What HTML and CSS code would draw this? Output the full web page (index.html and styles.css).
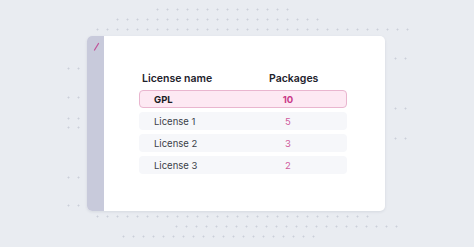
FILE: index.html
```html
<!DOCTYPE html>
<html>
<head>
<meta charset="utf-8">
<link rel="stylesheet" href="styles.css">
</head>
<body>
<div class="page">
  <div class="dots d-top1"></div>
  <div class="dots d-top2"></div>
  <div class="dots d-top3"></div>
  <div class="dots d-bot1"></div>
  <div class="dots d-bot2"></div>
  <div class="dots d-bot3"></div>
  <div class="dots d-left1"></div>
  <div class="dots d-left2"></div>
  <div class="dots d-left3"></div>
  <div class="dots d-left4"></div>
  <div class="dots d-left5"></div>
  <div class="dots d-left6"></div>
  <div class="dots d-right1"></div>
  <div class="dots d-right2"></div>
  <div class="dots d-right3"></div>

  <div class="card">
    <div class="sidebar">
      <svg class="slash" width="8" height="10" viewBox="0 0 8 10"><line x1="6.5" y1="1.5" x2="2.5" y2="8" stroke="#c0559a" stroke-width="1.3" stroke-linecap="round"/></svg>
    </div>
    <div class="content">
      <div class="table">
        <div class="thead">
          <span class="th-name">License name</span>
          <span class="th-pkg">Packages</span>
        </div>
        <div class="row active">
          <span class="name">GPL</span>
          <span class="num">10</span>
        </div>
        <div class="row">
          <span class="name">License 1</span>
          <span class="num">5</span>
        </div>
        <div class="row">
          <span class="name">License 2</span>
          <span class="num">3</span>
        </div>
        <div class="row">
          <span class="name">License 3</span>
          <span class="num">2</span>
        </div>
      </div>
    </div>
  </div>
</div>
</body>
</html>
```
FILE: styles.css
```css
* { box-sizing: border-box; }
html, body {
  margin: 0;
  padding: 0;
  width: 474px;
  height: 247px;
  overflow: hidden;
  background: #e9ecf1;
  font-family: Inter, "Liberation Sans", sans-serif;
}
.page {
  position: relative;
  width: 474px;
  height: 247px;
  padding: 36px 0 0 87px;
}
.dots {
  position: absolute;
  height: 3px;
  background-image: radial-gradient(circle at 1.5px 1.5px, #cbcfd9 0.8px, transparent 1.2px);
  background-size: 10px 3px;
  background-repeat: repeat-x;
}
.d-top1 { left: 156px; top: 8px; width: 133px; }
.d-top2 { left: 116px; top: 18px; width: 203px; }
.d-top3 { left: 96px; top: 28px; width: 313px; }
.d-bot1 { left: 96px; top: 215px; width: 273px; }
.d-bot2 { left: 175px; top: 225px; width: 223px; }
.d-bot3 { left: 122px; top: 235px; width: 196px; }
.d-left1, .d-left2, .d-left3, .d-left4, .d-left5, .d-left6 { left: 67px; width: 13px; }
.d-left1 { top: 67px; }
.d-left2 { top: 96px; }
.d-left3 { top: 117px; }
.d-left4 { top: 126px; }
.d-left5 { top: 176px; }
.d-left6 { top: 204px; }
.d-right1, .d-right2, .d-right3 { left: 394px; width: 13px; }
.d-right1 { top: 57px; }
.d-right2 { top: 107px; }
.d-right3 { top: 137px; }

.card {
  position: relative;
  display: flex;
  width: 298px;
  height: 175px;
  background: #ffffff;
  border-radius: 5px;
  overflow: hidden;
  box-shadow: 0 1px 3px rgba(40, 50, 80, 0.10);
}
.sidebar {
  width: 17px;
  background: #c8cadb;
  display: flex;
  justify-content: center;
  padding-top: 6px;
}
.slash { display: block; }
.content {
  flex: 1;
  padding: 34px 0 0 35px;
}
.table {
  width: 208px;
  display: flex;
  flex-direction: column;
  gap: 4px;
}
.thead {
  display: flex;
  height: 16px;
  align-items: center;
  font-size: 10.5px;
  font-weight: 600;
  color: #1d212b;
  padding-left: 3px;
}
.th-name { width: 127px; }
.row {
  display: flex;
  align-items: center;
  height: 18px;
  border-radius: 4px;
  background: #f6f7fa;
  font-size: 9.5px;
  color: #3b3f49;
  padding-left: 15px;
}
.row.active {
  background: #fde9f3;
  border: 1px solid #e9b6cf;
  padding-left: 14px;
  font-weight: 700;
  color: #1a1d25;
}
.name { width: 124px; }
.num {
  width: 20px;
  text-align: center;
  color: #cf5a9c;
}
.row.active .num { color: #c93a88; }
```
